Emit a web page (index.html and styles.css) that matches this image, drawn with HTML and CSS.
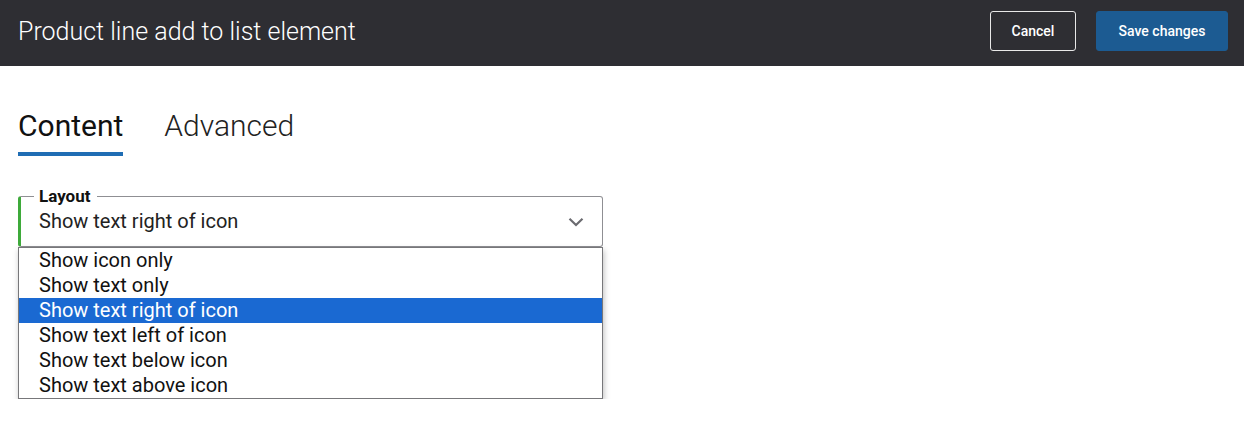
FILE: index.html
```html
<!DOCTYPE html>
<html>
<head>
<meta charset="utf-8">
<link rel="stylesheet" href="styles.css">
</head>
<body>
<header class="topbar">
  <h1 class="title">Product line add to list element</h1>
  <div class="actions">
    <button class="btn btn-outline">Cancel</button>
    <button class="btn btn-primary">Save changes</button>
  </div>
</header>
<main class="content">
  <nav class="tabs">
    <div class="tab tab-active">Content</div>
    <div class="tab">Advanced</div>
  </nav>
  <div class="field">
    <fieldset class="select">
      <legend class="legend">Layout</legend>
      <div class="select-row">
        <span class="select-value">Show text right of icon</span>
        <svg class="chevron" width="16" height="10" viewBox="0 0 16 10"><path d="M1.5 1.8 L8 8 L14.5 1.8" fill="none" stroke="#6b6b70" stroke-width="2.2"/></svg>
      </div>
    </fieldset>
    <ul class="listbox">
      <li class="option">Show icon only</li>
      <li class="option">Show text only</li>
      <li class="option option-selected">Show text right of icon</li>
      <li class="option">Show text left of icon</li>
      <li class="option">Show text below icon</li>
      <li class="option">Show text above icon</li>
    </ul>
  </div>
</main>
</body>
</html>
```
FILE: styles.css
```css
* { box-sizing: border-box; }
html, body { margin: 0; padding: 0; background: #fff; }
body { font-family: Roboto, "Liberation Sans", sans-serif; color: #111; }

.topbar {
  height: 66px;
  background: #2e2e33;
  display: flex;
  align-items: flex-start;
  justify-content: space-between;
  padding: 0 16px 0 18px;
}
.title {
  margin: 0;
  font-size: 25px;
  font-weight: 300;
  line-height: 30px;
  margin-top: 17px;
  color: #fff;
}
.actions { display: flex; gap: 20px; margin-top: 11px; }
.btn {
  height: 40px;
  font-family: Roboto, "Liberation Sans", sans-serif;
  font-size: 14px;
  font-weight: 500;
  color: #fff;
  border-radius: 3px;
  cursor: pointer;
  padding: 0;
}
.btn-outline {
  width: 86px;
  background: transparent;
  border: 1px solid #e8e8e8;
}
.btn-primary {
  width: 132px;
  background: #1c5b92;
  border: 1px solid #1c5b92;
}

.content { padding: 0 18px; }
.tabs {
  display: flex;
  gap: 41px;
  margin-top: 41px;
}
.tab {
  font-size: 30px;
  font-weight: 300;
  color: #222;
  padding-bottom: 8px;
  border-bottom: 4px solid transparent;
  line-height: 37px;
}
.tab-active {
  font-weight: 400;
  color: #111;
  border-bottom-color: #1f6db4;
}

.field { width: 585px; margin-top: 31px; }
.select {
  margin: 0;
  padding: 0 18px 0 18px;
  height: 60px;
  border: 1px solid #8f8f93;
  border-left: 3px solid #3eaa3a;
  border-radius: 3px;
}
.legend {
  font-size: 17px;
  font-weight: 700;
  color: #111;
  padding: 0 7px 0 5px;
  margin-left: -5px;
  line-height: 18px;
}
.select-row {
  display: flex;
  align-items: center;
  justify-content: space-between;
  height: 30px;
  margin-top: 1px;
}
.select-value { font-size: 20px; color: #222; }
.chevron { margin-top: 1px; }

.listbox {
  list-style: none;
  margin: 0;
  padding: 0;
  border: 1px solid #77777a;
  box-shadow: 1px 3px 6px rgba(0,0,0,0.25);
}
.option {
  height: 25px;
  line-height: 25px;
  font-size: 20px;
  padding-left: 20px;
  color: #111;
}
.option-selected { background: #1a69d2; color: #fff; }
```
